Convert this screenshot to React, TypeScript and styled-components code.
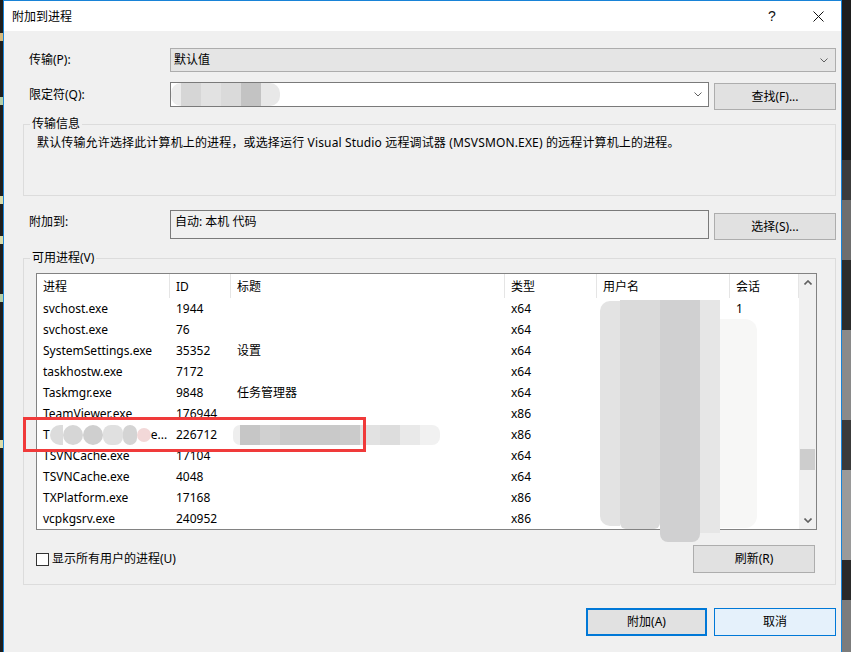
import React from 'react';
import styled, { createGlobalStyle } from 'styled-components';

const GlobalStyle = createGlobalStyle`
  html, body {
    margin: 0;
    padding: 0;
    background: #1e1e1e;
  }
  body {
    font-family: "Noto Sans", "Noto Sans CJK SC", sans-serif;
    font-size: 12px;
    color: #000;
  }
  * {
    box-sizing: border-box;
  }
`;

const HEADER_H = 24;
const ROW_H = 21;

const Screen = styled.div`
  display: flex;
  width: 851px;
  height: 652px;
  overflow: hidden;
  background: #1e1e1e;
`;

/* 背后编辑器露出的一条边 */
const EditorEdge = styled.div`
  flex: none;
  width: 3px;
  background: linear-gradient(
    to bottom,
    #1e1e1e 0 33px,
    #d7ba7d 33px 41px,
    #1e1e1e 41px 97px,
    #b5cea8 97px 105px,
    #1e1e1e 105px 196px,
    #dcdcaa 196px 204px,
    #1e1e1e 204px 236px,
    #dcdcaa 236px 244px,
    #1e1e1e 244px 294px,
    #b5cea8 294px 302px,
    #1e1e1e 302px 440px,
    #dcdcaa 440px 448px,
    #1e1e1e 448px 652px
  );
`;

const DesktopEdge = styled.div`
  flex: 1;
  background: linear-gradient(
    to bottom,
    #1e1e1e 0 160px,
    #3c3c3c 160px 200px,
    #6e6e6e 200px 260px,
    #2c2c2c 260px 330px,
    #8a8a8a 330px 420px,
    #3a3a3a 420px 470px,
    #9a9a9a 470px 560px,
    #2a2a2a 560px 600px,
    #7c7c7c 600px 652px
  );
`;

const Dialog = styled.div`
  flex: none;
  width: 839px;
  display: flex;
  flex-direction: column;
  background: #f0f0f0;
  border: 1px solid #1883d7;
  border-bottom: none;
`;

const TitleBar = styled.div`
  display: flex;
  align-items: center;
  height: 30px;
  background: #fff;
`;

const Title = styled.div`
  flex: 1;
  padding-left: 8px;
  font-size: 12px;
`;

const CaptionButton = styled.div`
  width: 46px;
  height: 30px;
  display: flex;
  align-items: center;
  justify-content: center;
  font-family: "Liberation Sans", sans-serif;
  font-size: 14px;
  color: #111;
`;

const Body = styled.div`
  display: flex;
  flex-direction: column;
  padding: 17px 5px 0 19px;
`;

const FieldRow = styled.div<{ $gap?: number }>`
  display: grid;
  grid-template-columns: 147px 1fr 127px;
  align-items: start;
  margin-top: ${(p) => p.$gap ?? 0}px;
`;

const FieldLabel = styled.div<{ $top: number }>`
  padding: ${(p) => p.$top}px 0 0 6px;
  line-height: 16px;
`;

const Combo = styled.div`
  grid-column: 2 / 4;
  display: flex;
  align-items: center;
  height: 24px;
  padding: 0 7px 0 3px;
  background: #e5e5e5;
  border: 1px solid #adadad;
  line-height: 16px;
`;

const TextCombo = styled.div`
  display: flex;
  align-items: center;
  height: 25px;
  padding: 0 6px 0 0;
  background: #fff;
  border: 1px solid #7a7a7a;
`;

const Chevron = styled.svg`
  margin-left: auto;
  flex: none;
`;

const ReadOnlyBox = styled.div`
  height: 29px;
  padding: 3px 4px 0;
  border: 1px solid #7a7a7a;
  line-height: 16px;
`;

const PushButton = styled.div<{ $width?: number; $offset?: number }>`
  justify-self: end;
  width: ${(p) => p.$width ?? 122}px;
  height: ${(p) => (p.$offset !== undefined ? 27 : 28)}px;
  margin-top: ${(p) => p.$offset ?? 0}px;
  display: flex;
  align-items: center;
  justify-content: center;
  background: #e1e1e1;
  border: 1px solid #adadad;
  line-height: 16px;
`;

const DialogButton = styled.div<{ $default?: boolean }>`
  width: ${(p) => (p.$default ? 121 : 122)}px;
  height: 28px;
  display: flex;
  align-items: center;
  justify-content: center;
  background: ${(p) => (p.$default ? '#e1e1e1' : '#e5f1fb')};
  border: ${(p) => (p.$default ? 2 : 1)}px solid #0078d7;
  line-height: 16px;
`;

const Group = styled.fieldset<{ $gap: number }>`
  position: relative;
  margin: ${(p) => p.$gap}px 0 0;
  padding: 0;
  min-width: 0;
  border: 1px solid #dcdcdc;
`;

const GroupTitle = styled.legend`
  margin-left: 6px;
  padding: 0 2px;
  line-height: 16px;
  font-size: 12px;
`;

const InfoText = styled.div`
  height: 63px;
  padding: 3px 13px 0;
  line-height: 16px;
  white-space: nowrap;
  letter-spacing: 0.15px;
`;

const GroupInner = styled.div`
  display: flex;
  flex-direction: column;
  padding: 7px 18px 11px 12px;
`;

const ProcessList = styled.div`
  position: relative;
  display: flex;
  background: #fff;
  border: 1px solid #828282;
`;

const Table = styled.div`
  flex: 1;
  display: flex;
  flex-direction: column;
`;

const COLS = '133px 61px 274px 92px 133px 69px';

const HeaderRow = styled.div`
  display: grid;
  grid-template-columns: ${COLS};
  height: ${HEADER_H}px;
`;

const HeaderCell = styled.div`
  padding: 1px 0 0 6px;
  line-height: ${HEADER_H - 1}px;
  border-right: 1px solid #e5e5e5;
`;

const Row = styled.div`
  display: grid;
  grid-template-columns: ${COLS};
  height: ${ROW_H}px;
`;

const Cell = styled.div`
  display: flex;
  align-items: center;
  padding: 1px 0 0 6px;
  line-height: ${ROW_H - 1}px;
  white-space: nowrap;
`;

const ScrollBar = styled.div`
  flex: none;
  width: 17px;
  display: flex;
  flex-direction: column;
  background: #f0f0f0;
`;

const ScrollArrow = styled.div`
  height: 17px;
  display: flex;
  align-items: center;
  justify-content: center;
`;

const ScrollTrack = styled.div`
  flex: 1;
  padding: 0 1px;
`;

const ScrollThumb = styled.div<{ $top: number }>`
  height: 21px;
  margin-top: ${(p) => p.$top}px;
  background: #cdcdcd;
`;

/* 打码 */
const Smudge = styled.div<{ $height: number; $shift?: number }>`
  display: flex;
  align-items: center;
  height: ${(p) => p.$height}px;
  margin-left: ${(p) => p.$shift ?? 0}px;
  filter: blur(0.6px);
`;

const SmudgeBlock = styled.div<{ $w: number; $c: string; $r?: string; $h?: number }>`
  flex: none;
  width: ${(p) => p.$w}px;
  height: ${(p) => (p.$h ? `${p.$h}px` : '100%')};
  background: ${(p) => p.$c};
  border-radius: ${(p) => p.$r ?? '0'};
`;

const UserSmudge = styled.div`
  position: absolute;
  left: 563px;
  top: ${HEADER_H}px;
  display: flex;
  align-items: flex-start;
  z-index: 1;
`;

const Stripe = styled.div<{ $w: number; $h: number; $c: string; $t?: number; $r?: string }>`
  width: ${(p) => p.$w}px;
  height: ${(p) => p.$h}px;
  margin-top: ${(p) => p.$t ?? 0}px;
  background: ${(p) => p.$c};
  border-radius: ${(p) => p.$r ?? '0'};
`;

const Highlight = styled.div`
  position: absolute;
  left: -14px;
  width: 343px;
  height: 35px;
  border: 3px solid #f03a3a;
  z-index: 2;
`;

const ActionRow = styled.div`
  display: flex;
  align-items: center;
  justify-content: space-between;
  margin-top: 15px;
  padding-right: 2px;
`;

const CheckLabel = styled.label`
  display: flex;
  align-items: center;
  gap: 3px;
  line-height: 16px;
`;

const CheckBox = styled.span`
  width: 13px;
  height: 13px;
  background: #fff;
  border: 1px solid #333;
`;

const Footer = styled.div`
  display: flex;
  justify-content: flex-end;
  gap: 7px;
  margin-top: 23px;
`;

interface Proc {
  name: string;
  id: string;
  title?: string;
  type: string;
  session?: string;
  hidden?: boolean;
}

const procs: Proc[] = [
  { name: 'svchost.exe', id: '1944', type: 'x64', session: '1' },
  { name: 'svchost.exe', id: '76', type: 'x64' },
  { name: 'SystemSettings.exe', id: '35352', title: '设置', type: 'x64' },
  { name: 'taskhostw.exe', id: '7172', type: 'x64' },
  { name: 'Taskmgr.exe', id: '9848', title: '任务管理器', type: 'x64' },
  { name: 'TeamViewer.exe', id: '176944', type: 'x86' },
  { name: 'T', id: '226712', type: 'x86', hidden: true },
  { name: 'TSVNCache.exe', id: '17104', type: 'x64' },
  { name: 'TSVNCache.exe', id: '4048', type: 'x64' },
  { name: 'TXPlatform.exe', id: '17168', type: 'x86' },
  { name: 'vcpkgsrv.exe', id: '240952', type: 'x86' },
];

const headers = ['进程', 'ID', '标题', '类型', '用户名', '会话'];

const DownChevron = () => (
  <Chevron width="8" height="5" viewBox="0 0 8 5">
    <polyline points="0.5,0.5 4,4 7.5,0.5" fill="none" stroke="#606060" strokeWidth="1" />
  </Chevron>
);

const ArrowGlyph = ({ up }: { up?: boolean }) => (
  <svg width="8" height="5" viewBox="0 0 8 5">
    <polyline
      points={up ? '0.5,4.5 4,1 7.5,4.5' : '0.5,0.5 4,4 7.5,0.5'}
      fill="none"
      stroke="#606060"
      strokeWidth="1.6"
    />
  </svg>
);

const NameSmudge = () => (
  <Smudge $height={20}>
    <SmudgeBlock $w={13} $c="#dcdcdc" $r="10px 0 0 10px" />
    <SmudgeBlock $w={20} $c="#d6d6d6" $r="10px" />
    <SmudgeBlock $w={20} $c="#cfcfcf" $r="10px" />
    <SmudgeBlock $w={20} $c="#e0e0e0" $r="8px" />
    <SmudgeBlock $w={14} $c="#d4d4d4" $r="8px" />
    <SmudgeBlock $w={14} $c="#f2d8d8" $r="8px" $h={14} />
  </Smudge>
);

const TitleSmudge = () => (
  <Smudge $height={20} $shift={-4}>
    <SmudgeBlock $w={7} $c="#eeeeee" $r="8px 0 0 8px" />
    <SmudgeBlock $w={20} $c="#c6c6c6" />
    <SmudgeBlock $w={20} $c="#d0d0d0" />
    <SmudgeBlock $w={20} $c="#cacaca" />
    <SmudgeBlock $w={40} $c="#c9c9c9" />
    <SmudgeBlock $w={20} $c="#cbcbcb" />
    <SmudgeBlock $w={20} $c="#e2e2e2" />
    <SmudgeBlock $w={20} $c="#dddddd" />
    <SmudgeBlock $w={20} $c="#e9e9e9" />
    <SmudgeBlock $w={20} $c="#f1f1f1" $r="0 8px 8px 0" />
  </Smudge>
);

const hiddenIndex = procs.findIndex((p) => p.hidden);

export default function App() {
  return (
    <Screen>
      <GlobalStyle />
      <EditorEdge />
      <Dialog>
        <TitleBar>
          <Title>附加到进程</Title>
          <CaptionButton>?</CaptionButton>
          <CaptionButton>
            <svg width="11" height="11" viewBox="0 0 11 11">
              <path d="M0.5 0.5 L10.5 10.5 M10.5 0.5 L0.5 10.5" stroke="#111" strokeWidth="1" />
            </svg>
          </CaptionButton>
        </TitleBar>

        <Body>
          <FieldRow>
            <FieldLabel $top={4}>传输(P):</FieldLabel>
            <Combo>
              默认值
              <DownChevron />
            </Combo>
          </FieldRow>

          <FieldRow $gap={10}>
            <FieldLabel $top={5}>限定符(Q):</FieldLabel>
            <TextCombo>
              <Smudge $height={23}>
                <SmudgeBlock $w={10} $c="#ececec" $r="10px 0 0 10px" />
                <SmudgeBlock $w={20} $c="#d6d6d6" />
                <SmudgeBlock $w={20} $c="#e2e2e2" />
                <SmudgeBlock $w={20} $c="#dadada" />
                <SmudgeBlock $w={20} $c="#c3c3c3" />
                <SmudgeBlock $w={19} $c="#e8e8e8" $r="0 10px 10px 0" />
              </Smudge>
              <DownChevron />
            </TextCombo>
            <PushButton $offset={1}>查找(F)...</PushButton>
          </FieldRow>

          <Group $gap={6}>
            <GroupTitle>传输信息</GroupTitle>
            <InfoText>
              默认传输允许选择此计算机上的进程，或选择运行 Visual Studio 远程调试器 (MSVSMON.EXE) 的远程计算机上的进程。
            </InfoText>
          </Group>

          <FieldRow $gap={14}>
            <FieldLabel $top={4}>附加到:</FieldLabel>
            <ReadOnlyBox>自动: 本机 代码</ReadOnlyBox>
            <PushButton $offset={3}>选择(S)...</PushButton>
          </FieldRow>

          <Group $gap={10}>
            <GroupTitle>可用进程(V)</GroupTitle>
            <GroupInner>
              <ProcessList>
                <Table>
                  <HeaderRow>
                    {headers.map((h) => (
                      <HeaderCell key={h}>{h}</HeaderCell>
                    ))}
                  </HeaderRow>
                  {procs.map((p, i) => (
                    <Row key={i}>
                      <Cell>
                        {p.name}
                        {p.hidden && (
                          <>
                            <NameSmudge />
                            e...
                          </>
                        )}
                      </Cell>
                      <Cell>{p.id}</Cell>
                      <Cell>{p.hidden ? <TitleSmudge /> : p.title}</Cell>
                      <Cell>{p.type}</Cell>
                      <Cell />
                      <Cell>{p.session}</Cell>
                    </Row>
                  ))}
                </Table>
                <ScrollBar>
                  <ScrollArrow>
                    <ArrowGlyph up />
                  </ScrollArrow>
                  <ScrollTrack>
                    <ScrollThumb $top={158} />
                  </ScrollTrack>
                  <ScrollArrow>
                    <ArrowGlyph />
                  </ScrollArrow>
                </ScrollBar>

                <UserSmudge>
                  <Stripe $w={20} $h={225} $t={3} $c="#e3e3e3" $r="10px 0 0 10px" />
                  <Stripe $w={40} $h={229} $t={2} $c="#dadada" $r="0 0 6px 6px" />
                  <Stripe $w={40} $h={242} $t={2} $c="#d0d0d1" $r="0 0 8px 8px" />
                  <Stripe $w={20} $h={233} $t={2} $c="#e6e6e6" />
                  <Stripe $w={37} $h={209} $t={21} $c="#f7f7f6" $r="0 12px 12px 0" />
                </UserSmudge>
                <Highlight style={{ top: HEADER_H + hiddenIndex * ROW_H - 7 }} />
              </ProcessList>

              <ActionRow>
                <CheckLabel>
                  <CheckBox />
                  显示所有用户的进程(U)
                </CheckLabel>
                <PushButton>刷新(R)</PushButton>
              </ActionRow>
            </GroupInner>
          </Group>

          <Footer>
            <DialogButton $default>附加(A)</DialogButton>
            <DialogButton>取消</DialogButton>
          </Footer>
        </Body>
      </Dialog>
      <DesktopEdge />
    </Screen>
  );
}
